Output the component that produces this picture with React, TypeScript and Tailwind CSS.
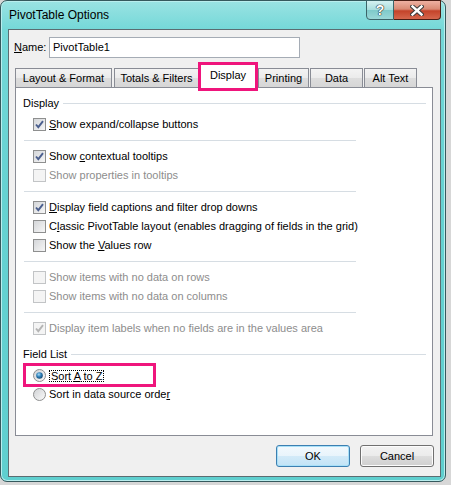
import React from 'react';

const PINK = 'border-[3px] border-[#ef157c]';

const Check: React.FC<{ checked?: boolean; disabled?: boolean }> = ({ checked, disabled }) => (
    <span
        className={`flex h-[13px] w-[13px] shrink-0 items-center justify-center border ${
            disabled ? 'border-[#c2c4c6] bg-[#f4f4f4]' : 'border-[#8e8f8f] bg-[linear-gradient(135deg,#d4d6d9,#f6f6f6)]'
        }`}
    >
        {checked && (
            <svg width="11" height="11" viewBox="0 0 11 11">
                <path
                    d="M2 5.5 L4.3 8.2 L9 2.2"
                    fill="none"
                    stroke={disabled ? '#b4b4b4' : '#4b5f8e'}
                    strokeWidth="1.9"
                />
            </svg>
        )}
    </span>
);

const Radio: React.FC<{ selected?: boolean; id: string }> = ({ selected, id }) => (
    <svg width="13" height="13" viewBox="0 0 13 13" className="shrink-0">
        <defs>
            <linearGradient id={`${id}-bg`} x1="0" y1="0" x2="1" y2="1">
                <stop offset="0" stopColor="#cfd1d4" />
                <stop offset="1" stopColor="#fbfbfb" />
            </linearGradient>
            <radialGradient id={`${id}-dot`} cx="0.4" cy="0.35" r="0.7">
                <stop offset="0" stopColor="#a6dbf7" />
                <stop offset="0.5" stopColor="#2d7fb8" />
                <stop offset="1" stopColor="#14466e" />
            </radialGradient>
        </defs>
        <circle cx="6.5" cy="6.5" r="6" fill={`url(#${id}-bg)`} stroke="#8e8f8f" />
        {selected && <circle cx="6.5" cy="6.5" r="3.3" fill={`url(#${id}-dot)`} />}
    </svg>
);

const Row: React.FC<{ children: React.ReactNode; checked?: boolean; disabled?: boolean }> = ({ children, checked, disabled }) => (
    <div className={`flex h-[19px] items-center gap-[3px] pl-[17px] ${disabled ? 'text-[#8d8d8d]' : 'text-black'}`}>
        <Check checked={checked} disabled={disabled} />
        <span className="leading-none">{children}</span>
    </div>
);

const Sep = () => <div className="mx-[8px] my-[6px] h-px w-[332px] bg-[#d6dde3]" />;

const GroupHead: React.FC<{ title: string }> = ({ title }) => (
    <div className="flex h-[16px] items-center pl-[7px] pr-[6px]">
        <span className="leading-none">{title}</span>
        <span className="ml-[4px] h-px flex-1 bg-[#d6dde3]" />
    </div>
);

const tabs = [
    { label: 'Layout & Format', w: 'w-[97px]', ml: 'ml-0' },
    { label: 'Totals & Filters', w: 'w-[85px]', ml: 'ml-[2px]' },
    { label: 'Display', w: 'w-[58px]', ml: 'ml-0', active: true },
    { label: 'Printing', w: 'w-[51px]', ml: 'ml-[1px]' },
    { label: 'Data', w: 'w-[53px]', ml: 'ml-[1px]' },
    { label: 'Alt Text', w: 'w-[53px]', ml: 'ml-[1px]' },
];

export default function App() {
    return (
        <div className="h-[485px] w-[451px] bg-[#d7d7d7] font-['Liberation_Sans',Arial,sans-serif] text-[11px] text-black">
            <div className="h-[482px] w-[446px] rounded-[7px] border border-[#35595d] bg-[linear-gradient(180deg,#9ae3e3_0%,#74d8d8_6%,#66d2d2_40%,#5fcfcf_100%)] shadow-[inset_0_0_0_1px_#b9eeee]">
                {/* title bar */}
                <div className="flex h-[28px] items-start justify-between">
                    <span className="pl-[8px] pt-[6px] text-[12px] leading-[16px] text-black">PivotTable Options</span>
                    <div className="-mt-px mr-[4px] flex">
                        <div className="flex h-[20px] w-[28px] items-center justify-center rounded-bl-[4px] border border-[#3b6468] bg-[linear-gradient(180deg,#d4f1f1_0%,#a9dede_48%,#7fcaca_52%,#9ad8d8_100%)]">
                            <span className="text-[14px] font-bold leading-none text-white [text-shadow:0_0_1px_#222,0_0_1px_#222,0_0_1px_#222]">?</span>
                        </div>
                        <div className="flex h-[20px] w-[47px] items-center justify-center rounded-br-[4px] border border-l-0 border-[#4a1d14] bg-[linear-gradient(180deg,#eeb1a2_0%,#d98a74_45%,#c4432a_55%,#d5674d_100%)]">
                            <svg width="14" height="11" viewBox="0 0 14 11">
                                <path d="M2.5 1.5 L11.5 9.5 M11.5 1.5 L2.5 9.5" stroke="#3a3a3a" strokeWidth="4.4" strokeLinecap="square" />
                                <path d="M2.5 1.5 L11.5 9.5 M11.5 1.5 L2.5 9.5" stroke="#ffffff" strokeWidth="2.4" strokeLinecap="square" />
                            </svg>
                        </div>
                    </div>
                </div>

                {/* dialog body */}
                <div className="ml-[7px] flex h-[448px] w-[433px] flex-col border border-[#5b6d72] bg-[#f0f0f0]">
                    <div className="flex items-center pl-[5px] pt-[7px]">
                        <span className="w-[35px]">
                            <span className="underline">N</span>ame:
                        </span>
                        <div className="flex h-[21px] w-[251px] items-center border border-[#a5acb5] bg-white pl-[3px]">PivotTable1</div>
                    </div>

                    <div className="relative z-10 ml-[6px] mt-[6px] flex h-[24px] items-end">
                        {tabs.map((t) =>
                            t.active ? (
                                <div key={t.label} className={`relative flex h-[24px] items-center justify-center border border-b-0 border-[#898c95] bg-white pb-[2px] ${t.w} ${t.ml}`}>
                                    {t.label}
                                    <div className={`absolute -left-[2px] -top-[3px] h-[29px] w-[60px] ${PINK}`} />
                                </div>
                            ) : (
                                <div
                                    key={t.label}
                                    className={`flex h-[20px] items-center justify-center border border-[#898c95] bg-[linear-gradient(180deg,#f3f3f3_0%,#ebebeb_50%,#dddddd_51%,#d6d6d6_100%)] ${t.w} ${t.ml}`}
                                >
                                    {t.label}
                                </div>
                            )
                        )}
                    </div>

                    <div className="-mt-px ml-[6px] flex h-[349px] w-[418px] flex-col border border-[#898c95] bg-white pt-[7px]">
                        <GroupHead title="Display" />
                        <div className="mt-[4px]">
                            <Row checked>
                                <span className="underline">S</span>how expand/collapse buttons
                            </Row>
                        </div>
                        <Sep />
                        <Row checked>
                            Show <span className="underline">c</span>ontextual tooltips
                        </Row>
                        <Row disabled>Show properties in tooltips</Row>
                        <Sep />
                        <Row checked>
                            <span className="underline">D</span>isplay field captions and filter drop downs
                        </Row>
                        <Row>
                            C<span className="underline">l</span>assic PivotTable layout (enables dragging of fields in the grid)
                        </Row>
                        <Row>
                            Show the <span className="underline">V</span>alues row
                        </Row>
                        <Sep />
                        <Row disabled>Show items with no data on rows</Row>
                        <Row disabled>Show items with no data on columns</Row>
                        <Sep />
                        <Row checked disabled>
                            Display item labels when no fields are in the values area
                        </Row>

                        <div className="mt-[8px]">
                            <GroupHead title="Field List" />
                        </div>
                        <div className="relative mt-[4px]">
                            <div className="flex h-[19px] items-center gap-[3px] pl-[17px]">
                                <Radio selected id="r1" />
                                <span className="border border-dotted border-black px-px leading-[10px]">
                                    Sort <span className="underline">A</span> to Z
                                </span>
                            </div>
                            <div className="flex h-[19px] items-center gap-[3px] pl-[17px]">
                                <Radio id="r2" />
                                <span className="leading-none">
                                    Sort in data source orde<span className="underline">r</span>
                                </span>
                            </div>
                            <div className={`absolute left-[7px] -top-[3px] h-[24px] w-[133px] ${PINK}`} />
                        </div>
                    </div>

                    <div className="mt-[9px] flex justify-end gap-[10px] pr-[6px]">
                        <button className="flex h-[22px] w-[74px] items-center justify-center rounded-[3px] border border-[#3c7fb1] bg-[linear-gradient(180deg,#f2f9fd_0%,#e8f4fb_50%,#d2eaf8_51%,#c2e3f6_100%)] shadow-[inset_0_0_0_1px_#a8e0f8]">
                            OK
                        </button>
                        <button className="flex h-[22px] w-[74px] items-center justify-center rounded-[3px] border border-[#707070] bg-[linear-gradient(180deg,#f2f2f2_0%,#ebebeb_50%,#dddddd_51%,#cfcfcf_100%)] shadow-[inset_0_0_0_1px_#fcfcfc]">
                            Cancel
                        </button>
                    </div>
                </div>
            </div>
        </div>
    );
}
